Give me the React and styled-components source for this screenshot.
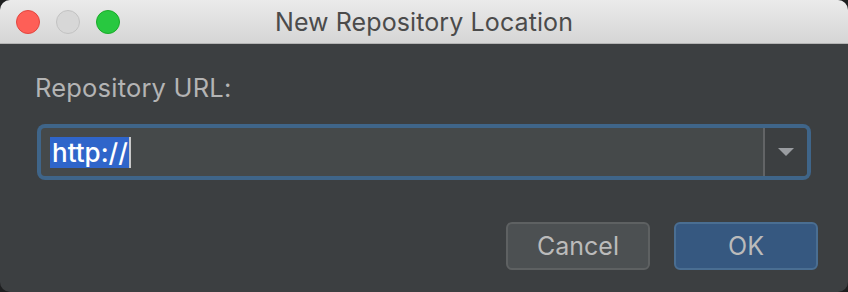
import React from 'react';
import styled, { createGlobalStyle } from 'styled-components';

const GlobalStyle = createGlobalStyle`
  html, body {
    margin: 0;
    padding: 0;
    background: #1e1f20;
  }
  * {
    box-sizing: border-box;
  }
`;

const Window = styled.div`
  width: 848px;
  height: 292px;
  display: flex;
  flex-direction: column;
  border-radius: 10px;
  overflow: hidden;
  background: #3c3f41;
  font-family: Inter, "Noto Sans", sans-serif;
`;

const TitleBar = styled.div`
  position: relative;
  height: 44px;
  flex: none;
  display: flex;
  align-items: center;
  justify-content: center;
  background: linear-gradient(#ebebeb, #d5d5d5);
  border-bottom: 1px solid #b4b4b4;
`;

const Lights = styled.div`
  position: absolute;
  left: 16px;
  top: 10px;
  display: flex;
  gap: 16px;
`;

const Light = styled.span`
  width: 24px;
  height: 24px;
  border-radius: 50%;
  background: ${p => p.color};
  border: 1px solid ${p => p.edge};
`;

const Title = styled.div`
  font-size: 25px;
  color: #4b4b4b;
  letter-spacing: 0.1px;
`;

const Body = styled.div`
  flex: 1;
  display: flex;
  flex-direction: column;
  padding: 28px 30px 0 37px;
`;

const Label = styled.div`
  font-size: 25.5px;
  line-height: 32px;
  color: #b4b4b4;
  margin-left: -2px;
  letter-spacing: 0.2px;
`;

const Combo = styled.div`
  margin-top: 20px;
  width: 774px;
  height: 56px;
  padding: 4px;
  border-radius: 8px;
  background: #3f6589;
  display: flex;
`;

const ComboInner = styled.div`
  flex: 1;
  display: flex;
  border-radius: 4px;
  overflow: hidden;
  background: #45494a;
`;

const Field = styled.div`
  flex: 1;
  display: flex;
  align-items: center;
  padding-left: 9px;
`;

const Selected = styled.span`
  background: #2f65ca;
  color: #ffffff;
  font-size: 26px;
  font-weight: 500;
  line-height: 31px;
  padding: 0 1px 0 2px;
  border-right: 2px solid #c8c8c8;
`;

const Arrow = styled.div`
  width: 44px;
  display: flex;
  align-items: center;
  justify-content: center;
  background: #3c3f41;
  border-left: 2px solid #626466;
`;

const Footer = styled.div`
  margin-top: 42px;
  display: flex;
  justify-content: flex-end;
  gap: 24px;
`;

const Button = styled.button`
  width: 144px;
  height: 48px;
  border-radius: 6px;
  font-family: inherit;
  font-size: 25px;
  color: #bbbbbb;
  background: ${p => (p.primary ? '#365880' : '#4c5052')};
  border: 2px solid ${p => (p.primary ? '#4a6e92' : '#5e6162')};
`;

export default function App() {
  return (
    <>
      <GlobalStyle />
      <Window>
        <TitleBar>
          <Lights>
            <Light color="#fe5f57" edge="#e2463f" />
            <Light color="#d7d7d7" edge="#c2c2c2" />
            <Light color="#28c840" edge="#1aab29" />
          </Lights>
          <Title>New Repository Location</Title>
        </TitleBar>
        <Body>
          <Label>Repository URL:</Label>
          <Combo>
            <ComboInner>
              <Field>
                <Selected>http://</Selected>
              </Field>
              <Arrow>
                <svg width="18" height="10" viewBox="0 0 18 10">
                  <path d="M1 1 H17 L9 9 Z" fill="#9a9da1" />
                </svg>
              </Arrow>
            </ComboInner>
          </Combo>
          <Footer>
            <Button>Cancel</Button>
            <Button primary>OK</Button>
          </Footer>
        </Body>
      </Window>
    </>
  );
}
